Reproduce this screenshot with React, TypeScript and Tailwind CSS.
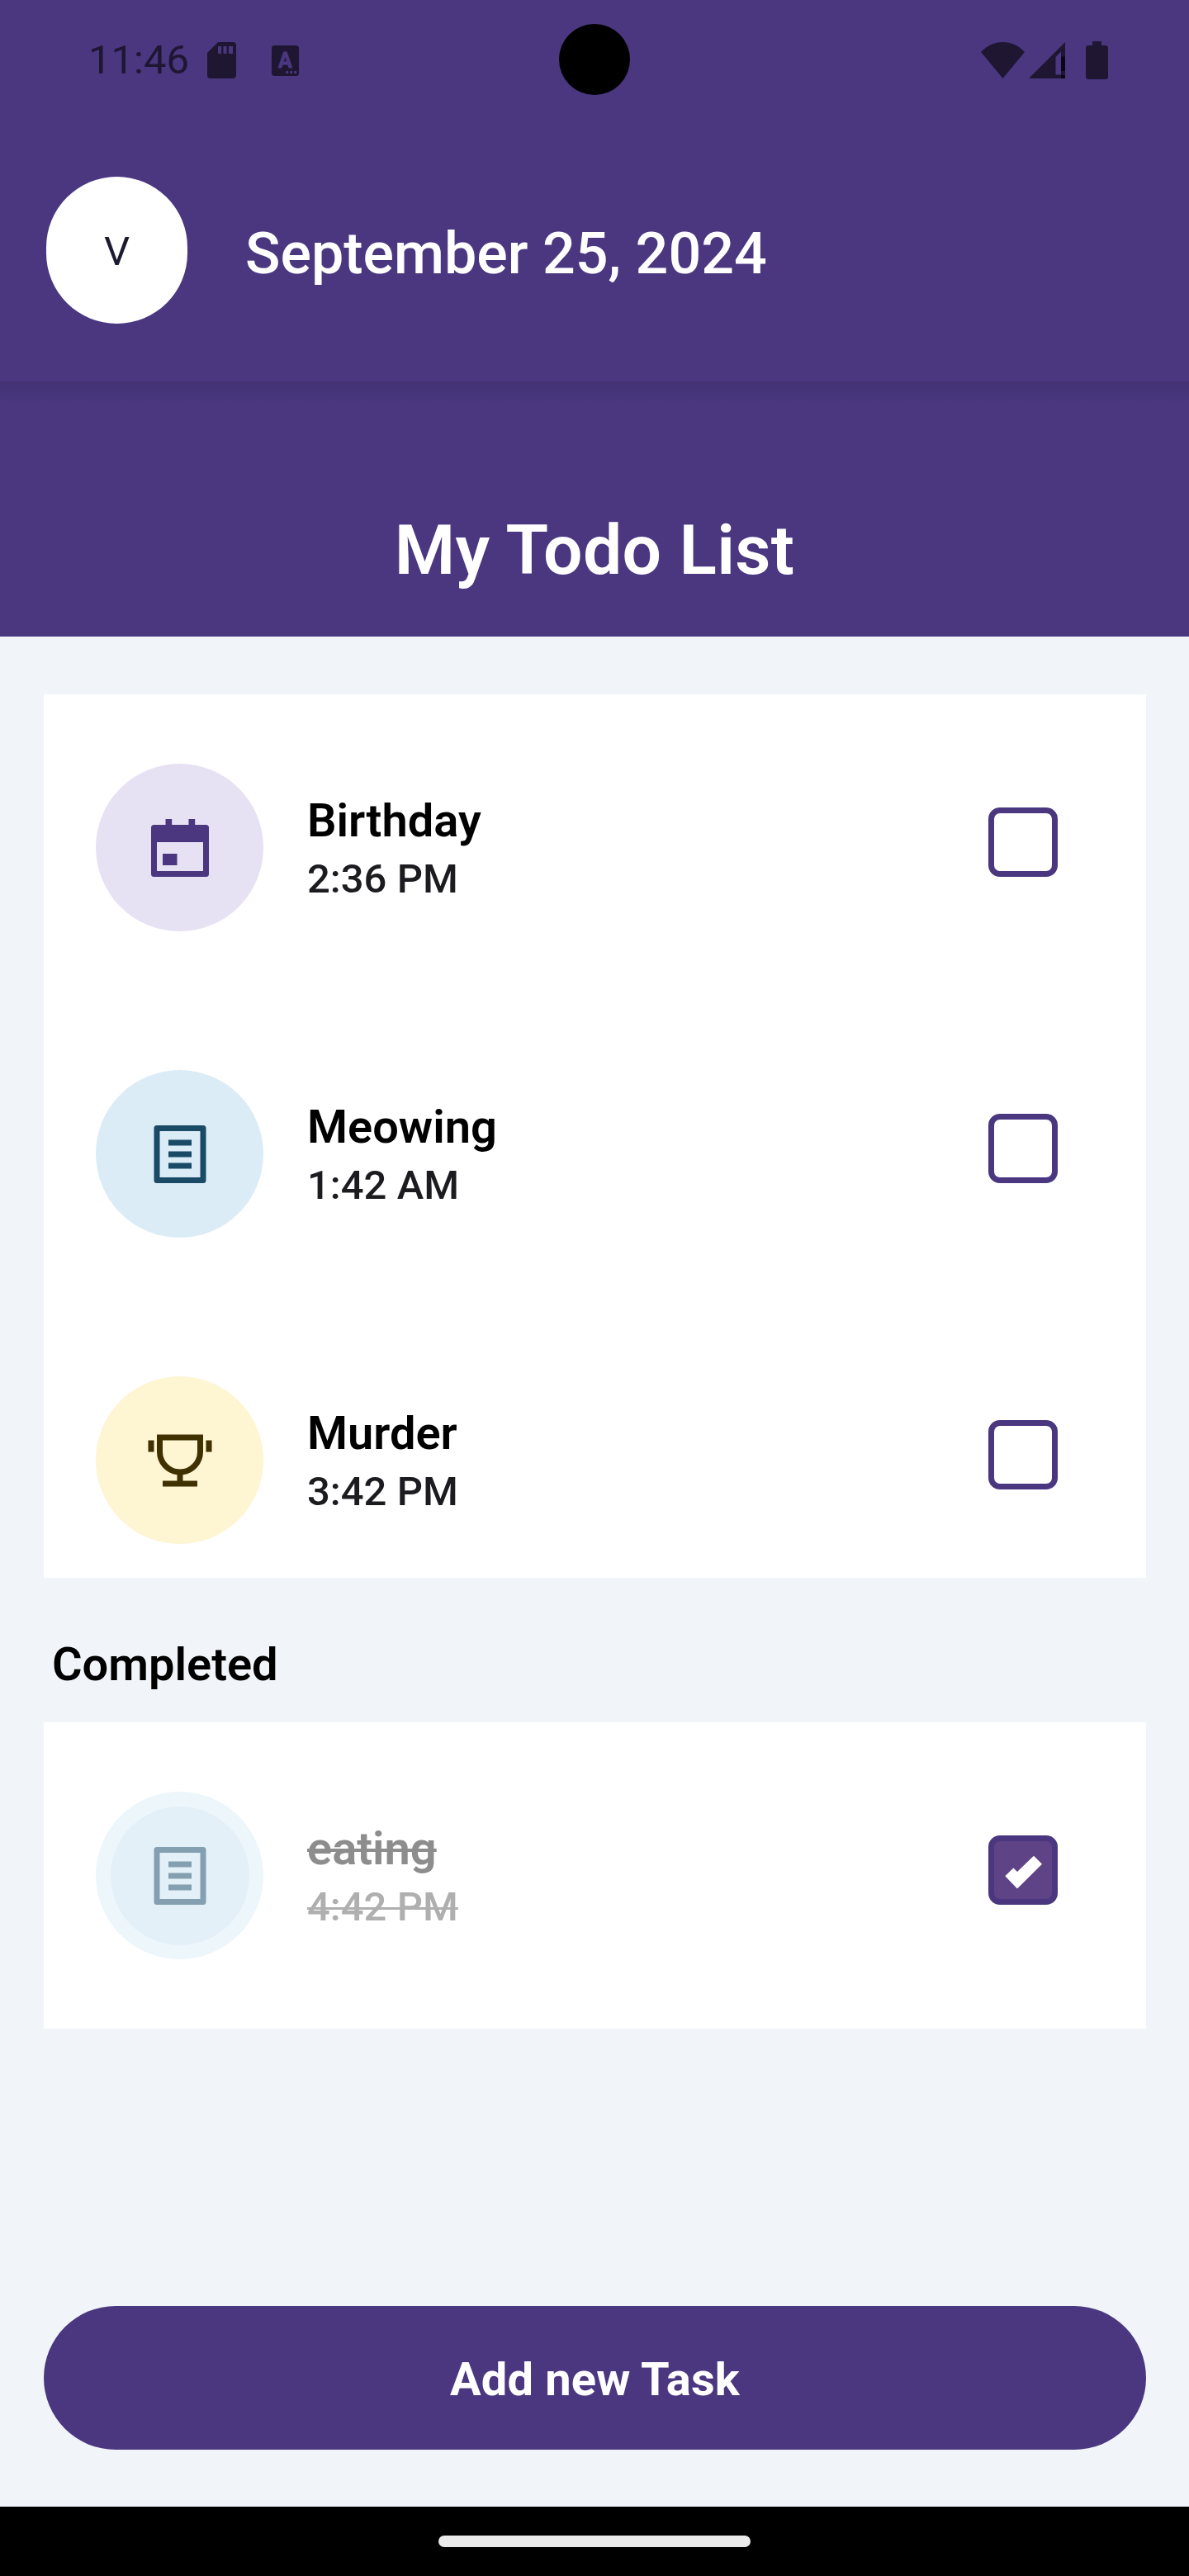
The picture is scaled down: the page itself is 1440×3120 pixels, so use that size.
import React, { useState } from 'react';
import clsx from 'clsx';

type Category = 'event' | 'task' | 'goal';

type Todo = {
  id: number;
  title: string;
  time: string;
  category: Category;
};

const initialTodos: Todo[] = [
  { id: 1, title: 'Birthday', time: '2:36 PM', category: 'event' },
  { id: 2, title: 'Meowing', time: '1:42 AM', category: 'task' },
  { id: 3, title: 'Murder', time: '3:42 PM', category: 'goal' },
  { id: 4, title: 'eating', time: '4:42 PM', category: 'task' }
];

const categoryStyles = {
  event: 'bg-[#e7e2f3] text-[#4a3780]',
  task: 'bg-[#dbecf6] text-[#194a66]',
  goal: 'bg-[#fef5d3] text-[#403100]'
};

const iconPaths = {
  event: 'M7 2h2.2v2h5.8V2h2.2v2H21a1 1 0 0 1 1 1v16a1 1 0 0 1-1 1H3a1 1 0 0 1-1-1V5a1 1 0 0 1 1-1h4zM4 10v10h16V10zM6 14h5v4H6z',
  task: 'M4 2h16a1 1 0 0 1 1 1v18a1 1 0 0 1-1 1H4a1 1 0 0 1-1-1V3a1 1 0 0 1 1-1zM5 4v16h14V4zM8 7h8v2H8zM8 11h8v2H8zM8 15h8v2H8z',
  goal: 'M4 3h16v6a8 8 0 0 1-7 7.94V19h5v2H6v-2h5v-2.06A8 8 0 0 1 4 9zM6 5v4a6 6 0 0 0 12 0V5zM1 5h2v4H1zM21 5h2v4h-2z'
};

const CategoryIcon = ({ category }: { category: Category }) => (
  <svg viewBox="0 0 24 24" className="h-[84px] w-[84px]" fill="currentColor" fillRule="evenodd">
    <path d={iconPaths[category]} />
  </svg>
);

const StatusBar = () => (
  <div className="relative flex h-[146px] items-center justify-between pl-[107px] pr-[98px] text-[#1f1632]">
    <div className="flex items-center">
      <span className="w-[144px] text-[49px] leading-[58px]">11:46</span>
      {/* SD card */}
      <svg viewBox="0 0 35 44" className="h-[44px] w-[35px]" fill="currentColor" fillRule="evenodd">
        <path d="M13 0h18a4 4 0 0 1 4 4v36a4 4 0 0 1-4 4H4a4 4 0 0 1-4-4V13zM13 5v9h4V5zM19.500 5v9h4V5zM26 5v9h5V5z" />
      </svg>
      {/* Keyboard language */}
      <svg viewBox="0 0 33 37" className="ml-[43px] h-[37px] w-[33px]">
        <rect width="33" height="37" rx="3.500" fill="currentColor" />
        <text
          x="16.500"
          y="26.500"
          textAnchor="middle"
          fontSize="25"
          fontWeight="700"
          fill="#4a3780"
          stroke="#4a3780"
          strokeWidth="0.8"
          strokeLinejoin="round"
        >
          A
        </text>
        <circle cx="18.700" cy="32.500" r="1.700" fill="#4a3780" />
        <circle cx="23.700" cy="32.500" r="1.700" fill="#4a3780" />
        <circle cx="28.700" cy="32.500" r="1.700" fill="#4a3780" />
      </svg>
    </div>

    {/* Camera cutout */}
    <div className="absolute left-[677px] top-[29px] h-[86px] w-[86px] rounded-full bg-black" />

    <div className="flex items-center">
      <svg viewBox="0 0 53 44" className="h-[44px] w-[53px]" fill="currentColor">
        <path d="M0 12C7.500 4 16.500 0 26.500 0S45.500 4 53 12L26.500 44z" />
      </svg>
      <svg viewBox="0 0 44 44" className="ml-[5px] h-[44px] w-[44px]">
        <path d="M0 44L44 0v44z" fill="currentColor" />
        <path d="M32.500 18L39 11.500V39.500H32.500z" fill="#4a3780" />
        <path d="M39 17.500h5V35h-5zM39 40h5v4h-5z" fill="#0c0713" />
      </svg>
      <svg viewBox="0 0 27 46" className="ml-[25px] h-[46px] w-[27px]" fill="currentColor">
        <path d="M8 0h11v5h5a3 3 0 0 1 3 3v35a3 3 0 0 1-3 3H3a3 3 0 0 1-3-3V8a3 3 0 0 1 3-3h5z" />
      </svg>
    </div>
  </div>
);

type TodoRowProps = {
  todo: Todo;
  done: boolean;
  onToggle: (id: number) => void;
};

const TodoRow = ({ todo, done, onToggle }: TodoRowProps) => (
  <div className="flex h-[371px] shrink-0 items-center pl-[63px] pr-[107px]">
    {/* A finished task keeps its ring and fades */}
    <div
      className={clsx(
        'flex h-[203px] w-[203px] shrink-0 items-center justify-center rounded-full',
        done ? 'bg-[#edf6fb]' : categoryStyles[todo.category]
      )}
    >
      {done ? (
        <div className="flex h-[168px] w-[168px] items-center justify-center rounded-full bg-[#e4f0f8] text-[#839fb0]">
          <CategoryIcon category={todo.category} />
        </div>
      ) : (
        <CategoryIcon category={todo.category} />
      )}
    </div>

    <div className="ml-[53px] flex flex-1 flex-col items-start gap-[9px] pt-px">
      <p className={clsx('text-[56px] font-semibold leading-[66px]', done ? 'text-[#8d8d8d] line-through decoration-[4px]' : 'text-black')}>
        {todo.title}
      </p>
      <p className={clsx('text-[49px] font-medium leading-[58px]', done ? 'text-[#afafaf] line-through decoration-[3px]' : 'text-[#1c1b1f]')}>
        {todo.time}
      </p>
    </div>

    <button
      onClick={() => onToggle(todo.id)}
      className={clsx(
        'mb-[13px] h-[84px] w-[84px] rounded-[14px] border-[7px] border-[#4a3780]',
        done ? 'bg-[#5e4386]' : 'bg-white'
      )}
    >
      {done && (
        <svg viewBox="7 7 70 70" className="h-[70px] w-[70px]" fill="white">
          <path d="M20.300 49.300L30.300 39.600L35 44L55 24.700L65 34.700L35 64.400z" />
        </svg>
      )}
    </button>
  </div>
);

const App = () => {
  const [completedIds, setCompletedIds] = useState<number[]>([4]);

  const toggle = (id: number) => {
    setCompletedIds((ids) => (ids.includes(id) ? ids.filter((item) => item !== id) : [...ids, id]));
  };

  const pending = initialTodos.filter((todo) => !completedIds.includes(todo.id));
  const completed = initialTodos.filter((todo) => completedIds.includes(todo.id));

  return (
    <div className="flex h-[3120px] w-[1440px] flex-col overflow-hidden bg-[#f1f5f9] font-['Roboto',sans-serif]">
      {/* App bar */}
      <header className="h-[462px] shrink-0 bg-[#4a3780]">
        <StatusBar />
        <div className="flex items-center pl-14 pt-[68px]">
          <div className="flex h-[178px] w-[171px] items-center justify-center rounded-full bg-white pt-[3px] text-[49px] text-[#1c1b2f]">
            V
          </div>
          <p className="ml-[70px] mt-2 text-[70px] font-medium leading-[82px] text-white">September 25, 2024</p>
        </div>
      </header>

      {/* Title banner */}
      <div className="h-[309px] shrink-0 bg-[#4a3780]">
        <div className="h-7 bg-gradient-to-b from-black/10 to-transparent" />
        <h1 className="pt-[128px] text-center text-[84px] font-semibold leading-[98px] tracking-[0.3px] text-white">My Todo List</h1>
      </div>

      <main className="flex flex-1 flex-col pl-[53px] pr-[52px] pt-[70px]">
        <section className="flex h-[1070px] flex-col overflow-hidden bg-white">
          {pending.map((todo) => (
            <TodoRow key={todo.id} todo={todo} done={false} onToggle={toggle} />
          ))}
        </section>

        <h2 className="ml-2.5 mt-[72px] text-[56px] font-semibold leading-[66px] text-black">Completed</h2>

        <section className="mt-[37px] flex h-[371px] flex-col overflow-hidden bg-white">
          {completed.map((todo) => (
            <TodoRow key={todo.id} todo={todo} done onToggle={toggle} />
          ))}
        </section>

        <button className="mt-[336px] h-[174px] w-full rounded-full bg-[#4a3780] pt-[3px] text-[56px] font-bold leading-[66px] tracking-[0.15px] text-white">
          Add new Task
        </button>
      </main>

      {/* Gesture bar */}
      <footer className="flex h-[84px] shrink-0 items-center justify-center bg-black">
        <div className="h-3.5 w-[378px] rounded-full bg-[#eaeaea]" />
      </footer>
    </div>
  );
};

export default App;
